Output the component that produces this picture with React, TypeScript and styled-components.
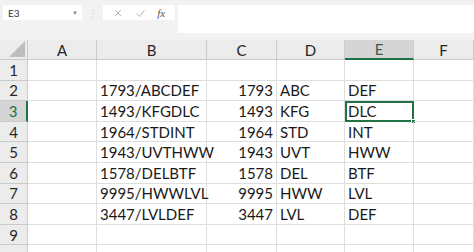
import styled, { createGlobalStyle, css } from 'styled-components';

const GlobalStyle = createGlobalStyle`
	html, body {
		margin: 0;
		padding: 0;
		background: #ffffff;
	}
	body {
		font-family: Lato, 'Liberation Sans', sans-serif;
	}
`;

const EXCEL_GREEN = '#217346';
const GRID_LINE = '#dedede';
const HEADER_LINE = '#cacaca';

const Page = styled.div`
	width: 474px;
	height: 252px;
	overflow: hidden;
	display: flex;
	flex-direction: column;
	background: #f2f2f2;
`;

const FormulaBar = styled.div`
	display: flex;
	align-items: flex-start;
	height: 40px;
	padding: 5px 0 0 3px;
	box-sizing: border-box;
	flex-shrink: 0;
`;

const NameBox = styled.div`
	width: 79px;
	height: 15px;
	background: #ffffff;
	display: flex;
	align-items: center;
	justify-content: space-between;
	padding: 0 4px 0 5px;
	box-sizing: border-box;
	font-size: 10px;
	color: #333;
`;

const Caret = styled.span`
	font-size: 6px;
	color: #888;
`;

const Grip = styled.div`
	width: 21px;
	height: 15px;
	display: flex;
	align-items: center;
	justify-content: center;
	color: #c4c4c4;
	font-size: 10px;
`;

const FxButtons = styled.div`
	width: 72px;
	height: 15px;
	background: #ffffff;
	display: flex;
	align-items: center;
	justify-content: space-around;
	padding: 0 4px;
	box-sizing: border-box;
`;

const FxLabel = styled.span`
	font-family: 'Liberation Serif', serif;
	font-style: italic;
	font-size: 11px;
	color: #555;
`;

const FormulaInput = styled.div`
	flex: 1;
	height: 28px;
	margin-left: 3px;
	background: #ffffff;
`;

const Grid = styled.div`
	display: grid;
	grid-template-columns: 28px 69px 110px 70px 68px 69px 1fr;
	grid-template-rows: 20px repeat(10, 20.6px);
	background: #ffffff;
	flex: 1;
`;

const Corner = styled.div`
	background: #ececec;
	border-right: 1px solid ${HEADER_LINE};
	border-bottom: 1px solid ${HEADER_LINE};
	position: relative;
	overflow: hidden;
	&::after {
		content: '';
		position: absolute;
		right: 2px;
		bottom: 2px;
		width: 0;
		height: 0;
		border-left: 16px solid transparent;
		border-bottom: 16px solid #bdbdbd;
	}
`;

const ColHeader = styled.div<{ $active?: boolean }>`
	background: #ececec;
	border-right: 1px solid ${HEADER_LINE};
	border-bottom: 1px solid ${HEADER_LINE};
	display: flex;
	align-items: center;
	justify-content: center;
	font-size: 15px;
	color: #262626;
	${(p) =>
		p.$active &&
		css`
			background: #d5d5d5;
			color: #3d5a4a;
			border-bottom: 2px solid ${EXCEL_GREEN};
		`}
`;

const RowHeader = styled.div<{ $active?: boolean }>`
	background: #ececec;
	border-right: 1px solid ${HEADER_LINE};
	border-bottom: 1px solid ${HEADER_LINE};
	display: flex;
	align-items: center;
	justify-content: center;
	font-size: 15px;
	color: #262626;
	${(p) =>
		p.$active &&
		css`
			background: #d5d5d5;
			color: ${EXCEL_GREEN};
			border-right: 2px solid ${EXCEL_GREEN};
		`}
`;

const Cell = styled.div<{ $align?: 'left' | 'right'; $selected?: boolean }>`
	border-right: 1px solid ${GRID_LINE};
	border-bottom: 1px solid ${GRID_LINE};
	display: flex;
	align-items: center;
	justify-content: ${(p) => (p.$align === 'right' ? 'flex-end' : 'flex-start')};
	padding: 0 3px;
	font-size: 15px;
	color: #1a1a1a;
	white-space: nowrap;
	position: relative;
	${(p) =>
		p.$selected &&
		css`
			outline: 2px solid ${EXCEL_GREEN};
			outline-offset: -2px;
			&::after {
				content: '';
				position: absolute;
				right: -3px;
				bottom: -3px;
				width: 5px;
				height: 5px;
				background: ${EXCEL_GREEN};
				border: 1px solid #ffffff;
				box-sizing: border-box;
			}
		`}
`;

const columns = ['A', 'B', 'C', 'D', 'E', 'F'];

const data: [string, string, string, string][] = [
	['1793/ABCDEF', '1793', 'ABC', 'DEF'],
	['1493/KFGDLC', '1493', 'KFG', 'DLC'],
	['1964/STDINT', '1964', 'STD', 'INT'],
	['1943/UVTHWW', '1943', 'UVT', 'HWW'],
	['1578/DELBTF', '1578', 'DEL', 'BTF'],
	['9995/HWWLVL', '9995', 'HWW', 'LVL'],
	['3447/LVLDEF', '3447', 'LVL', 'DEF'],
];

export default function App() {
	// row 10 is only a sliver at the bottom edge, so its number isn't shown
	const rows = Array.from({ length: 10 }, (_, i) => i + 1);

	return (
		<>
			<GlobalStyle />
			<Page>
				<FormulaBar>
					<NameBox>
						<span>E3</span>
						<Caret>▼</Caret>
					</NameBox>
					<Grip>⋮</Grip>
					<FxButtons>
						<svg width="10" height="10" viewBox="0 0 10 10">
							<path d="M2 2 L8 8 M8 2 L2 8" stroke="#b5b5b5" strokeWidth="1" fill="none" />
						</svg>
						<svg width="11" height="10" viewBox="0 0 11 10">
							<path d="M1.5 5.5 L4.5 8.5 L9.5 2" stroke="#b5b5b5" strokeWidth="1" fill="none" />
						</svg>
						<FxLabel>fx</FxLabel>
					</FxButtons>
					<FormulaInput />
				</FormulaBar>
				<Grid>
					<Corner />
					{columns.map((c) => (
						<ColHeader key={c} $active={c === 'E'}>
							{c}
						</ColHeader>
					))}
					{rows.map((r) => {
						const row = r >= 2 && r <= 8 ? data[r - 2] : null;
						return [
							<RowHeader key={`h${r}`} $active={r === 3}>
								{r < 10 ? r : null}
							</RowHeader>,
							<Cell key={`a${r}`} />,
							<Cell key={`b${r}`}>{row?.[0]}</Cell>,
							<Cell key={`c${r}`} $align="right">
								{row?.[1]}
							</Cell>,
							<Cell key={`d${r}`}>{row?.[2]}</Cell>,
							<Cell key={`e${r}`} $selected={r === 3}>
								{row?.[3]}
							</Cell>,
							<Cell key={`f${r}`} />,
						];
					})}
				</Grid>
			</Page>
		</>
	);
}
